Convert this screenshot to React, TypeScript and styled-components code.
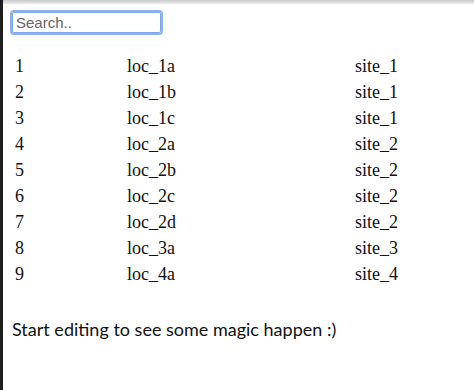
import styled, { createGlobalStyle } from 'styled-components';

const rows = [
  ['1', 'loc_1a', 'site_1'],
  ['2', 'loc_1b', 'site_1'],
  ['3', 'loc_1c', 'site_1'],
  ['4', 'loc_2a', 'site_2'],
  ['5', 'loc_2b', 'site_2'],
  ['6', 'loc_2c', 'site_2'],
  ['7', 'loc_2d', 'site_2'],
  ['8', 'loc_3a', 'site_3'],
  ['9', 'loc_4a', 'site_4'],
];

export default function App(): JSX.Element {
  return (
    <>
      <GlobalStyle />
      <Frame>
        <TopBar />
        <Content>
          <SearchInput placeholder="Search.." />
          <Table>
            <tbody>
              {rows.map((r) => (
                <Row key={r[0]}>
                  <IdCell>{r[0]}</IdCell>
                  <LocCell>{r[1]}</LocCell>
                  <Cell>{r[2]}</Cell>
                </Row>
              ))}
            </tbody>
          </Table>
          <Message>Start editing to see some magic happen :)</Message>
        </Content>
      </Frame>
    </>
  );
}

const GlobalStyle = createGlobalStyle`
  html, body {
    margin: 0;
    background: #fff;
  }
`;

const Frame = styled.div`
  height: 390px;
  border-left: 3px solid #1e1e1e;
  box-sizing: border-box;
  display: flex;
  flex-direction: column;
`;

const TopBar = styled.div`
  height: 4px;
  background: linear-gradient(#c9c9c9, #ececec);
`;

const Content = styled.div`
  padding: 8px 0 0 9px;
`;

const SearchInput = styled.input`
  display: block;
  width: 149px;
  height: 21px;
  box-sizing: border-box;
  margin: 0;
  padding: 1px 3px;
  border: 1px solid #7fa7e6;
  outline: 2px solid #8ab4f0;
  outline-offset: 0;
  border-radius: 2px;
  font-family: 'Helvetica', 'Liberation Sans', sans-serif;
  font-size: 15px;
  color: #333;
  &::placeholder {
    color: #666;
  }
`;

const Table = styled.table`
  border-collapse: collapse;
  margin-top: 20px;
  font-family: 'Liberation Serif', 'Times New Roman', serif;
  font-size: 18px;
  color: #111;
`;

const Row = styled.tr`
  height: 26px;
`;

const Cell = styled.td`
  padding: 0 0 0 3px;
  vertical-align: middle;
`;

const IdCell = styled(Cell)`
  width: 109px;
`;

const LocCell = styled(Cell)`
  width: 225px;
`;

const Message = styled.p`
  margin: 31px 0 0 0;
  font-family: 'Lato', sans-serif;
  font-size: 18px;
  line-height: 22px;
  color: #111;
`;
